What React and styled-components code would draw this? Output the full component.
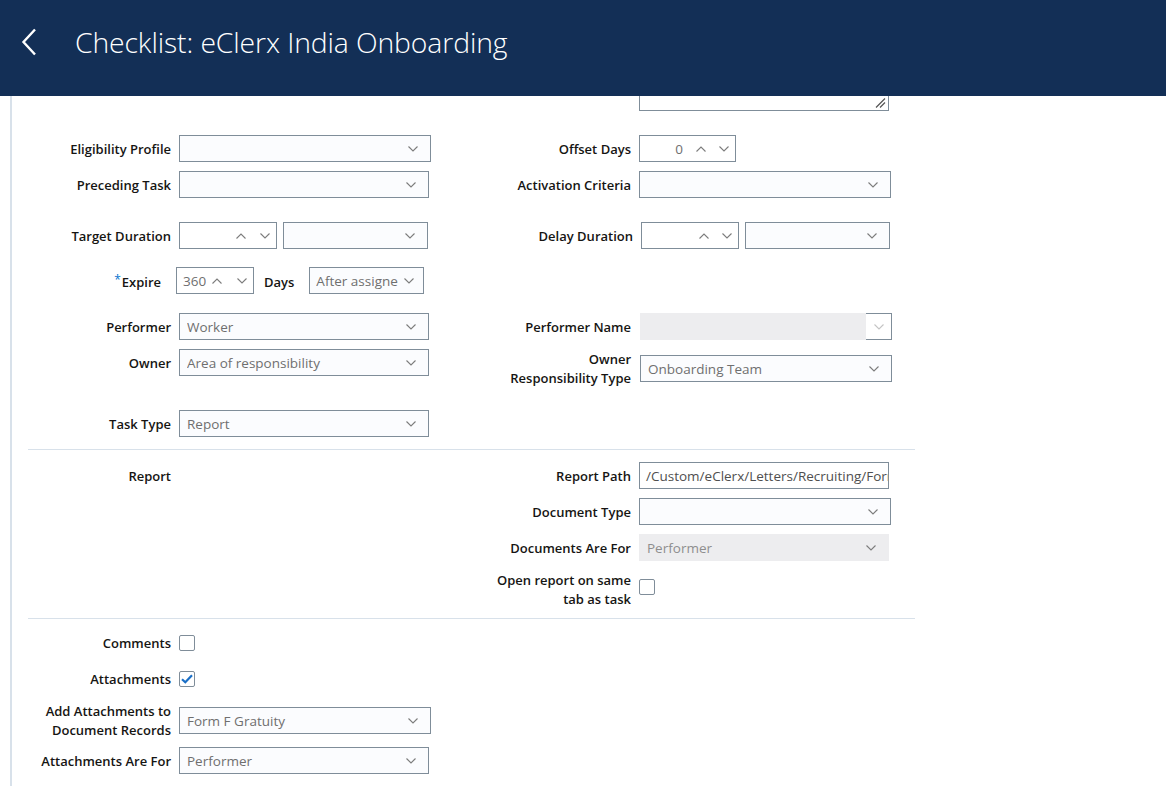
import React from 'react';
import styled, { createGlobalStyle, css } from 'styled-components';

const GlobalStyle = createGlobalStyle`
  html, body {
    margin: 0;
    padding: 0;
    background: #fff;
  }
  body {
    font-family: 'Open Sans', 'Noto Sans', Arial, sans-serif;
    color: #161513;
  }
  * {
    box-sizing: border-box;
  }
`;

const Header = styled.header`
  height: 96px;
  background: #132f56;
  display: flex;
  align-items: center;
  padding: 0 0 10px 19px;
`;

const BackButton = styled.button`
  background: none;
  border: none;
  padding: 0;
  display: flex;
  width: 20px;
  height: 28px;
  cursor: pointer;
  margin-top: -2px;
`;

const Title = styled.h1`
  margin: -2px 0 0 36px;
  font-weight: 300;
  font-size: 28.3px;
  color: #fff;
  letter-spacing: -0.1px;
`;

const Body = styled.main`
  margin-left: 10px;
  border-left: 2px solid #d8e1ea;
  padding-left: 16px;
  min-height: 690px;
`;

const Form = styled.div`
  width: 887px;
`;

const Row = styled.div`
  display: grid;
  grid-template-columns: 432px 455px;
  align-items: start;
  margin-top: ${p => p.$top || 0}px;
`;

const Column = styled.div`
  display: flex;
  flex-direction: column;
`;

const Field = styled.div`
  display: flex;
  align-items: ${p => p.$align || 'center'};
  gap: ${p => (p.$gap != null ? p.$gap : 8)}px;
  min-height: 27px;
  margin-top: ${p => p.$top || 0}px;
`;

const Label = styled.label`
  flex-shrink: 0;
  width: ${p => p.$width || 143}px;
  padding-top: 1px;
  text-align: right;
  font-size: 13px;
  font-weight: 600;
  line-height: 19px;
  color: #161513;
`;

const InlineLabel = styled(Label)`
  width: auto;
  margin: 2px 0 0 -5px;
`;

const Required = styled.span`
  color: #0572ce;
  font-weight: 400;
  margin-right: 1px;
  vertical-align: 3px;
  font-size: 12px;
`;

const boxBase = css`
  height: 27px;
  border: 1px solid #7f8d99;
  display: flex;
  align-items: center;
  font-size: 13.5px;
  flex-shrink: 0;
  overflow: hidden;
`;

const SelectBox = styled.div`
  ${boxBase};
  width: ${p => p.$width}px;
  background: #fbfcfe;
  padding: 0 12px 0 7px;
  color: #6f6f6f;
  ${p =>
    p.$disabled &&
    css`
      background: #ededef;
      border-color: #ededef;
      color: #8e8e8e;
    `}
`;

const SelectValue = styled.span`
  flex: 1;
  white-space: nowrap;
  overflow: hidden;
`;

const Chevron = styled.svg`
  width: 10px;
  height: 6px;
  flex-shrink: 0;
  stroke: ${p => (p.$light ? '#c4c4c4' : '#7c7c7c')};
  fill: none;
  stroke-width: 1.1;
  margin-left: ${p => p.$ml || 0}px;
`;

const NumberBox = styled.div`
  ${boxBase};
  width: ${p => p.$width}px;
  background: #fff;
  padding: 0 6px 0 6px;
  color: #6f6f6f;
`;

const NumberValue = styled.span`
  flex: 1;
  text-align: ${p => (p.$left ? 'left' : 'right')};
  white-space: nowrap;
  overflow: hidden;
  margin-right: ${p => p.$mr || 0}px;
`;

const ComboDisabled = styled.div`
  display: flex;
  width: 252px;
  height: 27px;
  flex-shrink: 0;
`;

const ComboFill = styled.div`
  flex: 1;
  background: #ededef;
`;

const ComboButton = styled.div`
  width: 26px;
  border: 1px solid #7f8d99;
  border-left: none;
  background: #fff;
  display: flex;
  align-items: center;
  justify-content: center;
`;

const TextInput = styled.div`
  ${boxBase};
  width: ${p => p.$width}px;
  background: #fff;
  padding: 0 6px;
  color: #4f4f4f;
  white-space: nowrap;
`;

const TextAreaTail = styled.div`
  width: 250px;
  height: 15px;
  margin-left: 179px;
  border: 1px solid #7f8d99;
  border-top: none;
  display: flex;
  justify-content: flex-end;
  align-items: flex-end;
  padding: 0 2px 2px 0;
`;

const Check = styled.span`
  width: 16px;
  height: 16px;
  border: 1px solid #7f8d99;
  border-radius: 2px;
  background: #fff;
  display: flex;
  align-items: center;
  justify-content: center;
  flex-shrink: 0;
  margin-top: ${p => p.$top || 0}px;
`;

const Divider = styled.hr`
  border: none;
  border-top: 1px solid #d8e1ea;
  margin: ${p => p.$top || 0}px 0 0;
  width: 887px;
`;

const Down = ({ light, ml }) => (
  <Chevron viewBox="0 0 10 6" $light={light} $ml={ml}>
    <path d="M0.5 0.5 L5 5 L9.5 0.5" />
  </Chevron>
);

const Up = ({ ml }) => (
  <Chevron viewBox="0 0 10 6" $ml={ml}>
    <path d="M0.5 5.5 L5 1 L9.5 5.5" />
  </Chevron>
);

const Select = ({ width, value, disabled }) => (
  <SelectBox $width={width} $disabled={disabled}>
    <SelectValue>{value}</SelectValue>
    <Down />
  </SelectBox>
);

const Spinner = ({ width, value, left, mr = 11, step = 14 }) => (
  <NumberBox $width={width}>
    <NumberValue $left={left} $mr={mr}>{value}</NumberValue>
    <Up />
    <Down ml={step} />
  </NumberBox>
);

const Checkbox = ({ checked, top }) => (
  <Check $top={top}>
    {checked && (
      <svg width="12" height="10" viewBox="0 0 12 10">
        <path d="M1 5.2 L4.3 8.3 L11 1.3" fill="none" stroke="#1a6fc7" strokeWidth="2.2" />
      </svg>
    )}
  </Check>
);

const App = () => (
  <>
    <GlobalStyle />
    <Header>
      <BackButton aria-label="Back">
        <svg width="20" height="28" viewBox="0 0 20 28">
          <path d="M16 1.5 L4.5 14 L16 26.5" fill="none" stroke="#fff" strokeWidth="2.4" />
        </svg>
      </BackButton>
      <Title>Checklist: eClerx India Onboarding</Title>
    </Header>

    <Body>
      <Form>
        <Row>
          <Column />
          <Column>
            <TextAreaTail>
              <svg width="11" height="10" viewBox="0 0 11 10">
                <path d="M1 9.5 L10 0.5 M5 9.5 L10 4.5" stroke="#555" strokeWidth="1.2" />
              </svg>
            </TextAreaTail>
          </Column>
        </Row>

        <Row $top={24}>
          <Field>
            <Label>Eligibility Profile</Label>
            <Select width={252} />
          </Field>
          <Field>
            <Label $width={171}>Offset Days</Label>
            <Spinner width={97} value="0" mr={13} step={13} />
          </Field>
        </Row>

        <Row $top={9}>
          <Field>
            <Label>Preceding Task</Label>
            <Select width={250} />
          </Field>
          <Field>
            <Label $width={171}>Activation Criteria</Label>
            <Select width={252} />
          </Field>
        </Row>

        <Row $top={24}>
          <Field>
            <Label>Target Duration</Label>
            <Spinner width={98} />
            <SelectBox $width={145} style={{ marginLeft: -2 }}>
              <SelectValue />
              <Down />
            </SelectBox>
          </Field>
          <Field>
            <Label $width={173}>Delay Duration</Label>
            <Spinner width={98} step={13} />
            <SelectBox $width={145} style={{ marginLeft: -2 }}>
              <SelectValue />
              <Down />
            </SelectBox>
          </Field>
        </Row>

        <Row $top={18}>
          <Field $gap={15}>
            <Label $width={133}>
              <Required>*</Required>Expire
            </Label>
            <NumberBox $width={78}>
              <NumberValue $left $mr={6}>360</NumberValue>
              <Up />
              <Down ml={15} />
            </NumberBox>
            <InlineLabel as="span">Days</InlineLabel>
            <SelectBox $width={115} style={{ padding: '0 9px 0 6px' }}>
              <SelectValue>After assigned</SelectValue>
              <Down ml={6} />
            </SelectBox>
          </Field>
          <Column />
        </Row>

        <Row $top={19}>
          <Field>
            <Label>Performer</Label>
            <Select width={250} value="Worker" />
          </Field>
          <Field $gap={9}>
            <Label $width={171}>Performer Name</Label>
            <ComboDisabled>
              <ComboFill />
              <ComboButton>
                <Down light />
              </ComboButton>
            </ComboDisabled>
          </Field>
        </Row>

        <Row $top={9}>
          <Field>
            <Label>Owner</Label>
            <Select width={250} value="Area of responsibility" />
          </Field>
          <Field $gap={9}>
            <Label $width={171}>
              Owner
              <br />
              Responsibility Type
            </Label>
            <Select width={252} value="Onboarding Team" />
          </Field>
        </Row>

        <Row $top={22}>
          <Field>
            <Label>Task Type</Label>
            <Select width={250} value="Report" />
          </Field>
          <Column />
        </Row>

        <Divider $top={12} />

        <Row $top={12}>
          <Field>
            <Label>Report</Label>
          </Field>
          <Column>
            <Field>
              <Label $width={171}>Report Path</Label>
              <TextInput $width={250}>/Custom/eClerx/Letters/Recruiting/Form F Gratuity.xdo</TextInput>
            </Field>
            <Field $top={9}>
              <Label $width={171}>Document Type</Label>
              <Select width={252} />
            </Field>
            <Field $top={9}>
              <Label $width={171}>Documents Are For</Label>
              <Select width={250} value="Performer" disabled />
            </Field>
            <Field $top={9} $align="flex-start">
              <Label $width={171}>
                Open report on same
                <br />
                tab as task
              </Label>
              <Checkbox top={9} />
            </Field>
          </Column>
        </Row>

        <Divider $top={9} />

        <Row $top={10}>
          <Column>
            <Field>
              <Label>Comments</Label>
              <Checkbox />
            </Field>
            <Field $top={9}>
              <Label>Attachments</Label>
              <Checkbox checked />
            </Field>
            <Field $top={9}>
              <Label>
                Add Attachments to
                <br />
                Document Records
              </Label>
              <Select width={252} value="Form F Gratuity" />
            </Field>
            <Field $top={7}>
              <Label>Attachments Are For</Label>
              <Select width={250} value="Performer" />
            </Field>
          </Column>
          <Column />
        </Row>
      </Form>
    </Body>
  </>
);

export default App;
